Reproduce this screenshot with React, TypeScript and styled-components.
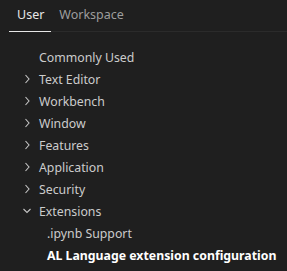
import styled, { createGlobalStyle } from 'styled-components';

const GlobalStyle = createGlobalStyle`
  html, body {
    margin: 0;
    padding: 0;
    background: #1f1f1f;
  }
  body {
    font-family: 'Noto Sans', 'Open Sans', sans-serif;
    font-size: 12.3px;
  }
`;

const Panel = styled.div`
  width: 287px;
  height: 271px;
  background: #1f1f1f;
  overflow: hidden;
`;

const TabBar = styled.div`
  display: flex;
  margin-left: 9px;
  height: 31px;
  border-bottom: 1px solid #2b2b2b;
`;

const Tab = styled.div<{ active?: boolean }>`
  padding: 5px 7px 0 8px;
  height: 26px;
  line-height: 20px;
  font-size: 12.5px;
  color: ${(p) => (p.active ? '#e7e7e7' : '#9d9d9d')};
  border-bottom: 1px solid ${(p) => (p.active ? '#e7e7e7' : 'transparent')};
  margin-bottom: -1px;
`;

const Tree = styled.div`
  display: flex;
  flex-direction: column;
  padding-top: 14px;
`;

const Row = styled.div<{ depth: number; selected?: boolean }>`
  display: flex;
  align-items: center;
  height: 22px;
  padding-left: ${(p) => 23 + p.depth * 8}px;
  color: ${(p) => (p.selected ? '#ffffff' : '#cccccc')};
  font-weight: ${(p) => (p.selected ? 700 : 400)};
  white-space: nowrap;
`;

const Twistie = styled.span`
  display: inline-flex;
  width: 16px;
  justify-content: flex-start;
  color: #c5c5c5;
`;

type Item = { label: string; depth: number; state?: 'open' | 'closed'; selected?: boolean };

const items: Item[] = [
  { label: 'Commonly Used', depth: 0 },
  { label: 'Text Editor', depth: 0, state: 'closed' },
  { label: 'Workbench', depth: 0, state: 'closed' },
  { label: 'Window', depth: 0, state: 'closed' },
  { label: 'Features', depth: 0, state: 'closed' },
  { label: 'Application', depth: 0, state: 'closed' },
  { label: 'Security', depth: 0, state: 'closed' },
  { label: 'Extensions', depth: 0, state: 'open' },
  { label: '.ipynb Support', depth: 1 },
  { label: 'AL Language extension configuration', depth: 1, selected: true },
];

function Chevron({ open }: { open: boolean }) {
  return (
    <svg width="8" height="10" viewBox="0 0 8 10" fill="none" stroke="#c5c5c5" strokeWidth="1.1">
      {open ? <path d="M0.5 3 L4 6.5 L7.5 3" /> : <path d="M2.5 1 L6 5 L2.5 9" />}
    </svg>
  );
}

export default function App() {
  return (
    <Panel>
      <GlobalStyle />
      <TabBar>
        <Tab active>User</Tab>
        <Tab>Workspace</Tab>
      </TabBar>
      <Tree>
        {items.map((it) => (
          <Row key={it.label} depth={it.depth} selected={it.selected}>
            <Twistie>{it.state && <Chevron open={it.state === 'open'} />}</Twistie>
            {it.label}
          </Row>
        ))}
      </Tree>
    </Panel>
  );
}
